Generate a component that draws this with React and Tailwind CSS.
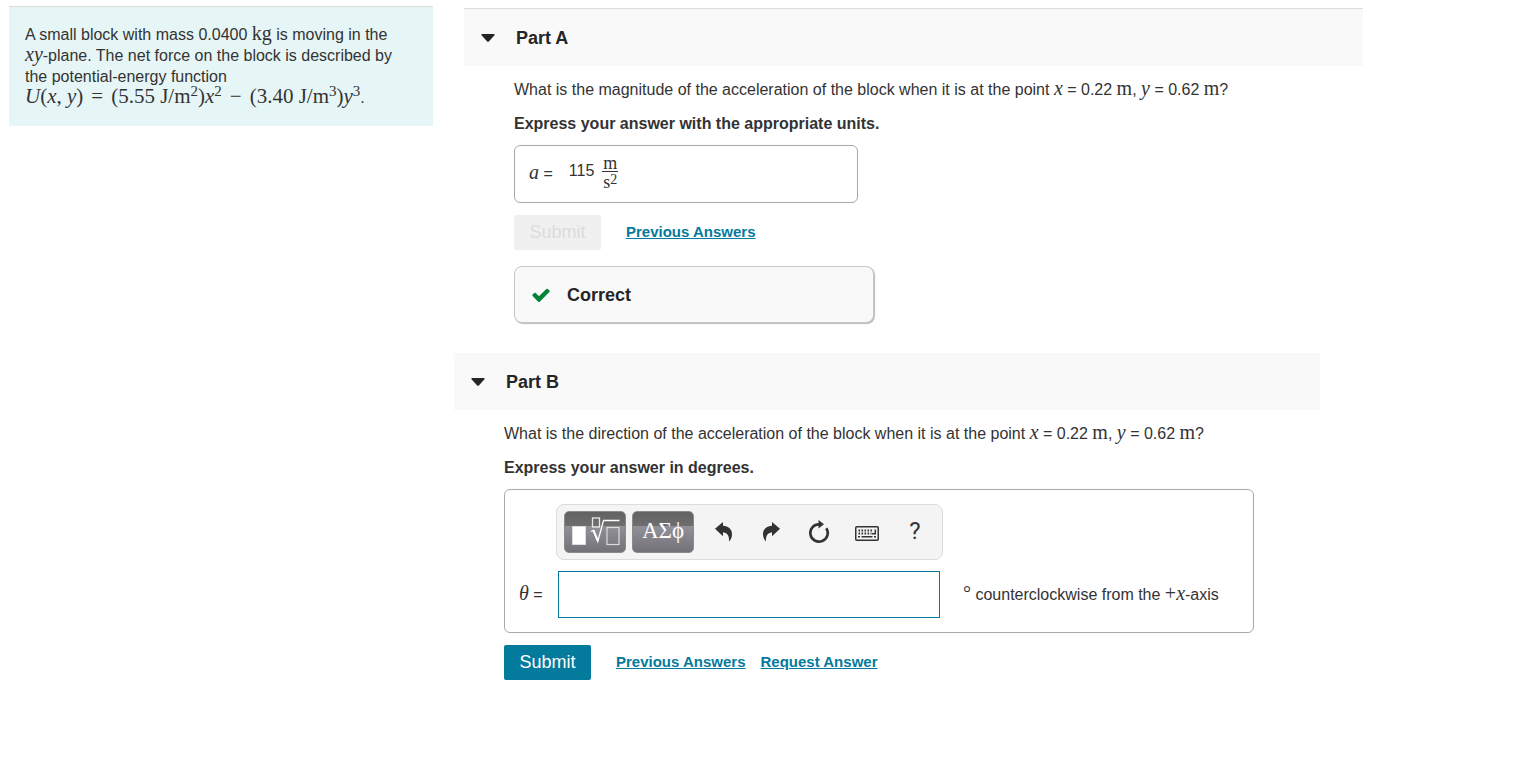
import React from "react";

function Var({ children }) {
  return <i className="font-['Liberation_Serif',serif] text-[20px] leading-[0]">{children}</i>;
}

function Unit({ children }) {
  return <span className="font-['Liberation_Serif',serif] text-[20px] leading-[0]">{children}</span>;
}

function Sup({ children }) {
  return <sup className="text-[15px]">{children}</sup>;
}

function PartHeader({ title, className }) {
  return (
    <h2 className={"bg-[#f9f9f9] " + className}>
      <button type="button" aria-expanded="true" className="flex h-[57px] w-full items-center gap-[21px] pl-[17px] text-left text-lg font-bold text-[#252525]">
        <svg width="14" height="8" viewBox="0 0 14 8" aria-hidden="true">
          <path d="M1 0h12a.7.7 0 0 1 .5 1.2L7.8 7.4a1.1 1.1 0 0 1-1.6 0L.5 1.2A.7.7 0 0 1 1 0Z" fill="#252525" />
        </svg>
        {title}
      </button>
    </h2>
  );
}

function TextLink({ children }) {
  return (
    <a href="#" className="text-[15px] font-bold text-[#047a9c] underline">
      {children}
    </a>
  );
}

function Question({ children, instruction }) {
  return (
    <div className="mb-[9px] flex flex-col gap-[10px] leading-6">
      <p>{children}</p>
      <p className="font-bold">{instruction}</p>
    </div>
  );
}

function IconButton({ label, children }) {
  return (
    <button type="button" aria-label={label} className="flex h-[42px] w-12 items-center justify-center text-[#333]">
      {children}
    </button>
  );
}

const padKey =
  "flex h-[42px] w-[62px] items-center justify-center rounded-[5px] border border-[#8b8b8b] bg-[linear-gradient(#626262,#6e6e6e_34%,#929199_35%,#737277)] text-white";

function Toolbar() {
  return (
    <div role="toolbar" aria-label="Equation editor" className="flex h-14 items-center rounded-lg border border-[#dcdcdc] bg-[#f4f4f4] pl-[7px] pr-[2px]">
      <div className="flex gap-[6px]">
        <button type="button" aria-label="Templates" className={padKey}>
          <svg width="50" height="30" viewBox="0 0 50 30" fill="none" aria-hidden="true">
            <rect x="2.5" y="9.5" width="13" height="18" fill="#fff" stroke="#ddd" />
            <rect x="22.500" y="1" width="7" height="9" stroke="#e8e8e8" strokeWidth="1.300" />
            <path d="M21 14.500l2.500-1.200 4.300 11.200L33.500 3.500H49.500" stroke="#fff" strokeWidth="1.300" />
            <path d="M23.500 13.500l4.200 10" stroke="#fff" strokeWidth="2" />
            <rect x="37" y="10.500" width="12" height="17" stroke="#ddd" strokeWidth="1.200" />
          </svg>
        </button>
        <button type="button" aria-label="Symbols" className={padKey + " pb-1 font-['Liberation_Serif','DejaVu_Serif',serif] text-[23px] leading-none"}>
          ΑΣϕ
        </button>
      </div>
      <div className="ml-[5px] flex">
        <IconButton label="Undo">
          <svg width="17" height="20" viewBox="0 0 17 20" fill="currentColor" aria-hidden="true">
            <path d="M0 6.800 8 0v3.800c5.500.4 9 3.600 9 8.200 0 3.200-1 5.700-3 7.500.4-4.600-1-8.600-6-9.200v4Z" />
          </svg>
        </IconButton>
        <IconButton label="Redo">
          <svg width="17" height="20" viewBox="0 0 17 20" fill="currentColor" aria-hidden="true">
            <path d="M17 6.800 9 0v3.800C3.500 4.200 0 7.400 0 12c0 3.200 1 5.700 3 7.500-.4-4.600 1-8.600 6-9.200v4Z" />
          </svg>
        </IconButton>
        <IconButton label="Reset">
          <svg width="21" height="24" viewBox="0 0 21 24" fill="none" aria-hidden="true">
            <path d="M17.300 8.200A8.700 8.700 0 1 1 10.500 4.300" stroke="currentColor" strokeWidth="2.700" />
            <path d="M9.500 0l5.500 4.300-5.500 4.200Z" fill="currentColor" />
          </svg>
        </IconButton>
        <IconButton label="Keyboard">
          <svg width="24" height="20" viewBox="0 0 24 20" fill="none" stroke="currentColor" aria-hidden="true">
            <rect x=".75" y="4.750" width="22.500" height="13.500" rx="1" strokeWidth="1.500" />
            <path d="M3.500 8.500h15" strokeWidth="1.800" strokeDasharray="1.600 1.400" />
            <path d="M3.500 11.500h13" strokeWidth="1.800" strokeDasharray="1.600 1.400" />
            <path d="M17 11.800h3.300V7.500" strokeWidth="1.500" />
            <path d="M3 14.800h2M6.500 14.800h11M19 14.800h2" strokeWidth="1.600" />
          </svg>
        </IconButton>
        <IconButton label="Help">
          <span className="pb-[2px] font-[Roboto,sans-serif] text-[24px] leading-none">?</span>
        </IconButton>
      </div>
    </div>
  );
}

export default function App() {
  return (
    <div className="flex items-start bg-white pb-24 font-['Liberation_Sans',Arial,sans-serif] text-base text-[#333]">
      <aside className="ml-[9px] mt-[6px] w-[424px] shrink-0 border-t border-[#dcdcdc] bg-[#e6f6f6] pb-[18px] pl-4 pr-6 pt-[17px] leading-[21px]">
        <p>
          A small block with mass 0.0400 <Unit>kg</Unit> is moving in the{" "}
          <span className="whitespace-nowrap"><Var>xy</Var>-plane.</span> The net force on the block is described by the
          potential-energy function
        </p>
        <p className="whitespace-nowrap">
          <span className="font-['Liberation_Serif',serif] text-[21px] leading-[0]">
            <i>U</i>(<i>x</i>, <i>y</i>)<span className="mx-2">=</span>(5.55 J/m<Sup>2</Sup>)<i>x</i><Sup>2</Sup>
            <span className="mx-2">−</span>(3.40 J/m<Sup>3</Sup>)<i>y</i><Sup>3</Sup>
          </span>
          .
        </p>
      </aside>

      <main className="ml-[21px] mt-2 min-w-0 flex-1">
        <section className="ml-[10px]">
          <PartHeader title="Part A" className="mr-[157px] border-t border-[#dcdcdc]" />
          <div className="pl-[50px] pt-3">
            <Question instruction="Express your answer with the appropriate units.">
              What is the magnitude of the acceleration of the block when it is at the point <Var>x</Var> = 0.22{" "}
              <Unit>m</Unit>, <Var>y</Var> = 0.62 <Unit>m</Unit>?
            </Question>
            <div className="flex h-[58px] max-w-[344px] items-center rounded-md border border-[#a9a9a9] px-[14px]">
              <span><Var>a</Var> =</span>
              <span className="ml-4 flex items-center gap-2 pb-[6px]">
                115
                <span className="mt-1 flex flex-col items-center font-['Liberation_Serif',serif] text-[18px] leading-5">
                  <span className="border-b border-[#333] px-px leading-4">m</span>
                  <span>s<sup className="-top-1 text-[14px]">2</sup></span>
                </span>
              </span>
            </div>
            <div className="mt-3 flex items-center gap-[25px]">
              <button type="button" disabled className="h-[35px] w-[87px] rounded-xs bg-[#f0f0f0] pb-[2px] text-lg text-[#dcdcdc]">
                Submit
              </button>
              <TextLink>Previous Answers</TextLink>
            </div>
            <div className="mt-4 flex h-[57px] max-w-[360px] items-center gap-4 rounded-lg border border-[#c7c7c7] bg-[#f9f9f9] pl-4 text-lg font-bold text-[#252525] shadow-[1px_1px_1px_#bbb]">
              <svg width="20" height="20" viewBox="0 0 1792 1792" fill="#038238" aria-hidden="true">
                <path d="M1671 566q0 40-28 68l-724 724-136 136q-28 28-68 28t-68-28l-136-136-362-362q-28-28-28-68t28-68l136-136q28-28 68-28t68 28l294 295 656-657q28-28 68-28t68 28l136 136q28 28 28 68z" />
              </svg>
              Correct
            </div>
          </div>
        </section>

        <section className="mt-[30px]">
          <PartHeader title="Part B" className="mr-[200px]" />
          <div className="pl-[50px] pt-3">
            <Question instruction="Express your answer in degrees.">
              What is the direction of the acceleration of the block when it is at the point <Var>x</Var> = 0.22{" "}
              <Unit>m</Unit>, <Var>y</Var> = 0.62 <Unit>m</Unit>?
            </Question>
            <div className="grid max-w-[750px] grid-cols-[37px_387px_1fr] items-center gap-y-[11px] rounded-md border border-[#a9a9a9] py-[14px] pl-[14px]">
              <div className="col-start-2">
                <Toolbar />
              </div>
              <label htmlFor="theta" className="col-start-1 whitespace-nowrap">
                <Var>θ</Var> =
              </label>
              <div className="flex px-[2px]">
                <input id="theta" type="text" className="h-[47px] w-[382px] border border-[#047a9c] bg-white px-2 outline-none" />
              </div>
              <span className="whitespace-nowrap pl-5">
                <Unit>°</Unit> counterclockwise from the <Unit>+</Unit><Var>x</Var>-axis
              </span>
            </div>
            <div className="mt-3 flex items-center">
              <button type="button" className="mr-[25px] h-[35px] w-[87px] rounded-xs bg-[#047a9c] pb-[2px] text-lg text-white">
                Submit
              </button>
              <div className="flex gap-[15px]">
                <TextLink>Previous Answers</TextLink>
                <TextLink>Request Answer</TextLink>
              </div>
            </div>
          </div>
        </section>
      </main>
    </div>
  );
}
